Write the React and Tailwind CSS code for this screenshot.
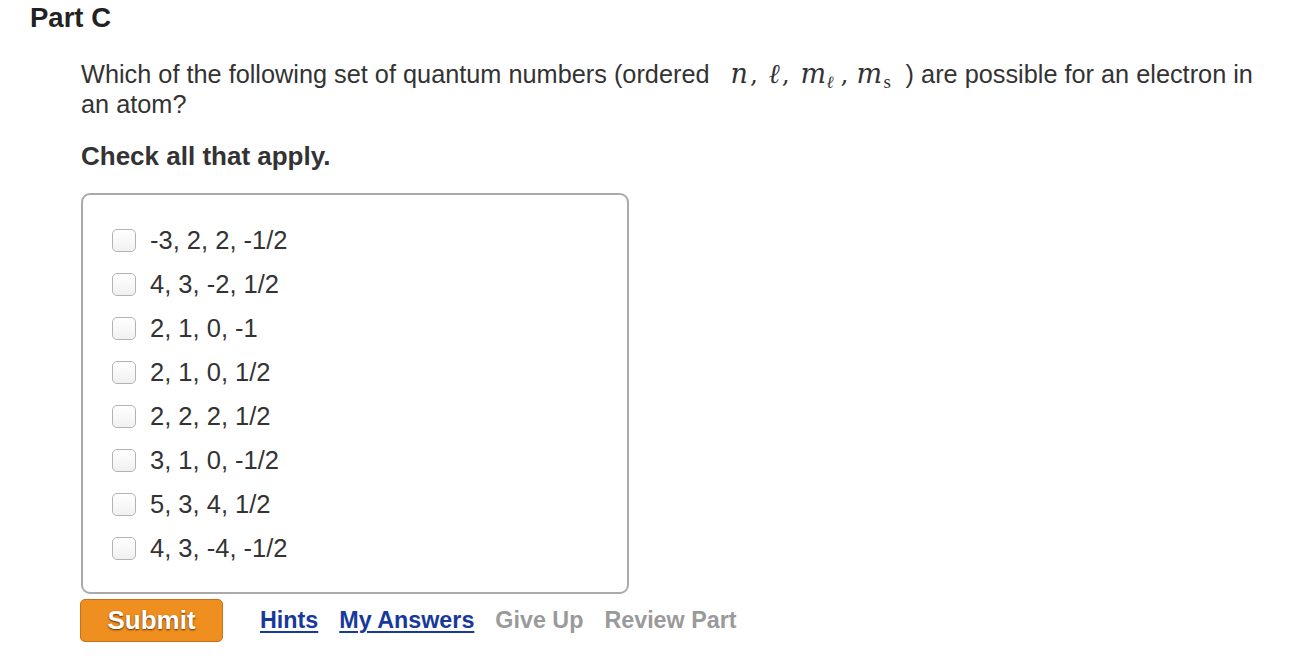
import React from "react";

const OPTIONS = [
  "-3, 2, 2, -1/2",
  "4, 3, -2, 1/2",
  "2, 1, 0, -1",
  "2, 1, 0, 1/2",
  "2, 2, 2, 1/2",
  "3, 1, 0, -1/2",
  "5, 3, 4, 1/2",
  "4, 3, -4, -1/2",
];

const box = "inline-block font-['DejaVu_Serif',serif] leading-none";
const mi = "italic text-[27px]";
const mo = "not-italic text-[25px]";
const sb = "inline-block relative top-[5px] font-['DejaVu_Serif',serif] text-[17px] leading-none";

export default function App() {
  return (
    <div className="min-h-screen w-full bg-white font-['Liberation_Sans',Arial,sans-serif] text-[#333]">
      {/* Heading */}
      <h2 className="pl-[30px] pt-[2px] text-[27.5px] leading-[32px] font-bold text-[#222]">Part C</h2>

      <div className="pl-[81px]">
        {/* Question */}
        <p className="mt-[25px] w-[1185px] text-[25.3px] leading-[30px]">
          Which of the following set of quantum numbers (ordered{" "}
          <span className="ml-[14px] whitespace-nowrap">
            <span className={`${box} w-[38px]`}>
              <span className={mi}>n</span>
              <span className={`${mo} ml-[2px]`}>,</span>
            </span>
            <span className={`${box} w-[32px]`}>
              <span className={mi}>ℓ</span>
              <span className={`${mo} ml-[2px]`}>,</span>
            </span>
            <span className={`${box} ${mi} w-[26px]`}>m</span>
            <span className={`${sb} w-[14px] italic`}>ℓ</span>
            <span className={`${box} ${mo} w-[16px]`}>,</span>
            <span className={`${box} ${mi} w-[27px]`}>m</span>
            <span className={`${sb} w-[15px] font-['Liberation_Serif',serif] text-[19px]`}>s</span>
          </span>{" "}
          ) are possible for an electron in an atom?
        </p>

        <p className="mt-[22px] text-[26px] leading-[30px] font-bold">Check all that apply.</p>

        {/* Choices */}
        <div className="mt-[22px] w-[548px] rounded-[9px] border-2 border-[#aaa] pt-[23px] pb-[22px] pl-[29px]">
          {OPTIONS.map((opt) => (
            <label key={opt} className="flex h-[44px] items-center">
              <span className="h-[23px] w-[24px] shrink-0 rounded-[5px] border border-[#b3b3b3] bg-gradient-to-b from-white to-[#f1f1f1] shadow-[inset_0_1px_0_#fff]" />
              <span className="ml-[14px] text-[25.5px] leading-[44px]">{opt}</span>
            </label>
          ))}
        </div>
      </div>

      {/* Actions */}
      <div className="mt-[5px] flex items-center pl-[80px]">
        <button className="h-[43px] w-[143px] rounded-[5px] border border-[#c8711c] bg-[#ef8f1f] text-[26px] font-bold text-white [text-shadow:0_1px_2px_rgba(70,25,0,0.85)]">
          Submit
        </button>
        <div className="ml-[37px] flex items-center gap-[21px] text-[23.3px] font-bold">
          <a className="text-[#17399b] underline underline-offset-[3px] decoration-2">Hints</a>
          <a className="text-[#17399b] underline underline-offset-[3px] decoration-2">My Answers</a>
          <span className="text-[#9a9a9a]">Give Up</span>
          <span className="text-[#9a9a9a]">Review Part</span>
        </div>
      </div>
    </div>
  );
}
